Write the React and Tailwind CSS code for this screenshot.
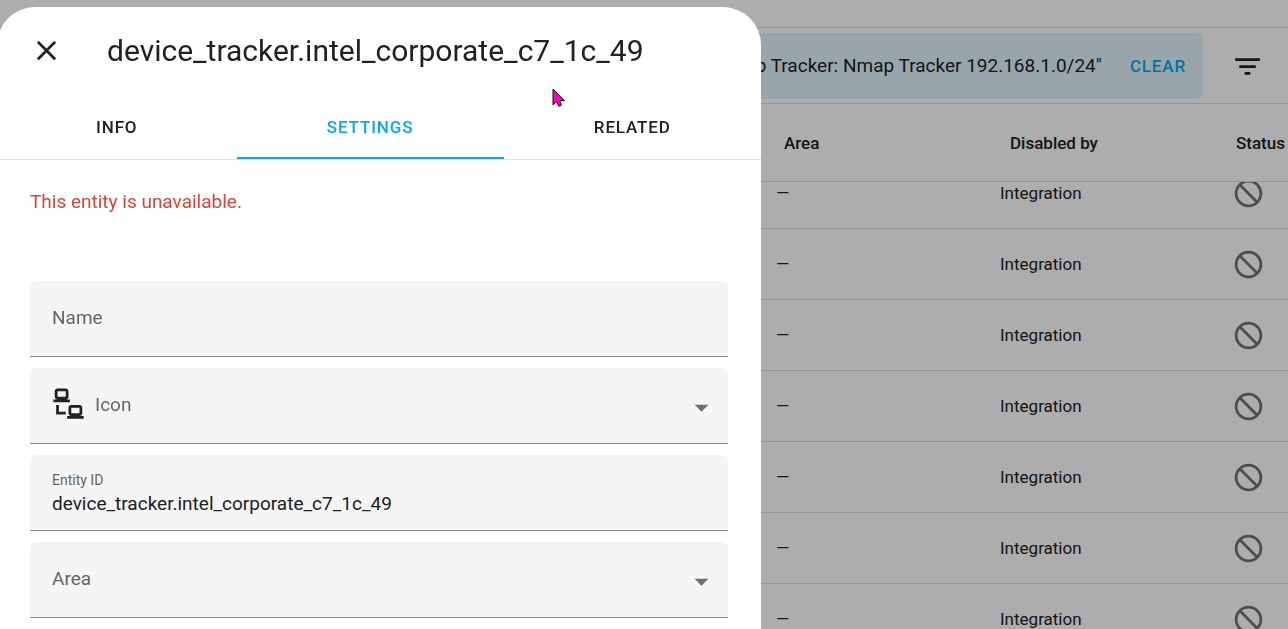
import React, { useLayoutEffect, useRef } from "react";

const icons = {
  close: "M19,6.41L17.59,5L12,10.59L6.41,5L5,6.41L10.59,12L5,17.59L6.41,19L12,13.41L17.59,19L19,17.59L13.41,12L19,6.41Z",
  filter: "M6,13H18V11H6M3,6V8H21V6M10,18H14V16H10V18Z",
  cancel: "M12,2A10,10 0 1,0 12,22A10,10 0 1,0 12,2M12,4C16.42,4 20,7.58 20,12C20,13.85 19.37,15.55 18.31,16.9L7.1,5.69C8.45,4.63 10.15,4 12,4M5.69,7.1L16.9,18.31C15.55,19.37 13.85,20 12,20C7.58,20 4,16.42 4,12C4,10.15 4.63,8.45 5.69,7.1Z",
  lan: "M4,1C2.89,1 2,1.89 2,3V7C2,8.11 2.89,9 4,9H1V11H13V9H10C11.11,9 12,8.11 12,7V3C12,1.89 11.11,1 10,1H4M4,3H10V7H4V3M3,13V20H10V18H5V13H3M14,13C12.89,13 12,13.89 12,15V19C12,20.11 12.89,21 14,21H11V23H23V21H20C21.11,21 22,20.11 22,19V15C22,13.89 21.11,13 20,13H14M14,15H20V19H14V15Z",
  down: "M7,10L12,15L17,10H7Z",
};

const Icon = ({ path, className = "" }) => (
  <svg viewBox="0 0 24 24" fill="currentColor" fillRule="evenodd" aria-hidden="true" className={`size-[33px] shrink-0 ${className}`}>
    <path d={path} />
  </svg>
);

const rows = [1, 2, 3, 4, 5, 6, 7];

const EntityTable = () => {
  const scroller = useRef(null);

  // Start slightly scrolled, so the first row slides under the header
  useLayoutEffect(() => {
    scroller.current.scrollTop = 24;
  }, []);

  return (
    <div ref={scroller} className="flex-1 min-h-0 overflow-hidden">
      <table className="w-full table-fixed border-separate border-spacing-0 text-left text-[17px]">
        <colgroup>
          <col />
          <col className="w-[224px]" />
          <col className="w-[232px]" />
          <col className="w-[78px]" />
        </colgroup>
        <thead className="sticky top-0 z-10 bg-white">
          <tr className="h-[78px]">
            <td className="border-b border-black/12"></td>
            <th className="border-b border-black/12 pt-0.5 pl-[30px] font-medium">Area</th>
            <th className="border-b border-black/12 pt-0.5 pl-8 font-medium">Disabled by</th>
            <th className="border-b border-black/12 pt-0.5 pl-[26px] font-medium">Status</th>
          </tr>
        </thead>
        <tbody>
          {rows.map((row) => (
            <tr key={row} className="h-[71px]">
              <td className="border-b border-black/12"></td>
              <td className="border-b border-black/12 pt-0.5 pl-[22px]">—</td>
              <td className="border-b border-black/12 pt-0.5 pl-[22px]">Integration</td>
              <td className="border-b border-black/12 pl-[22px] text-[#727272]">
                <Icon path={icons.cancel} />
              </td>
            </tr>
          ))}
        </tbody>
      </table>
    </div>
  );
};

const Tab = ({ label, active }) => (
  <button
    role="tab"
    aria-selected={active}
    className={`flex flex-auto items-center justify-center border-b-2 px-8 pt-1 text-[17px] font-medium uppercase tracking-wider ${active ? "border-[#03a9f4] text-[#03a9f4]" : "border-transparent"}`}
  >
    <span className="min-w-[59px]">{label}</span>
  </button>
);

// Filled text field; the label sits inline while the field is empty
const Field = ({ id, label, icon, value, dropdown }) => (
  <div className="flex h-[76px] items-center rounded-t-md border-b border-[#8a8a8a] bg-[#f5f5f5] pl-[22px] pr-[10px]">
    {icon && <Icon path={icon} className="mr-[10px] mb-1" />}
    {value ? (
      <div className="flex flex-1 flex-col">
        <label htmlFor={id} className="text-sm leading-5 text-[#666]">{label}</label>
        <input id={id} defaultValue={value} className="h-[26px] w-full bg-transparent pt-1 text-[19px] outline-none" />
      </div>
    ) : (
      <>
        <label htmlFor={id} className="text-[19px] text-[#666]">{label}</label>
        <input id={id} className="h-full min-w-0 flex-1 bg-transparent pl-2 text-[19px] outline-none" />
      </>
    )}
    {dropdown && (
      <button type="button" aria-label={`Open ${label} list`} className="mt-1 text-[#6e6e6e]">
        <Icon path={icons.down} />
      </button>
    )}
  </div>
);

const EntityDialog = () => (
  <div role="dialog" aria-labelledby="dialog-title" className="-ml-[3px] flex w-[764px] shrink-0 flex-col rounded-t-[38px] bg-white">
    <header className="flex h-[87px] items-center pl-[33px]">
      <button aria-label="Close">
        <Icon path={icons.close} />
      </button>
      <h1 id="dialog-title" className="pl-11 text-[30px] leading-9">device_tracker.intel_corporate_c7_1c_49</h1>
    </header>
    <div role="tablist" className="flex h-[66px] border-b border-black/12">
      <Tab label="Info" />
      <Tab label="Settings" active />
      <Tab label="Related" />
    </div>
    <div className="px-[33px] pt-7">
      <p className="text-[19px] leading-7 text-[#db4437]">This entity is unavailable.</p>
      <form className="mt-[65px] flex flex-col gap-[11px]">
        <Field id="name" label="Name" />
        <Field id="icon" label="Icon" icon={icons.lan} dropdown />
        <Field id="entity-id" label="Entity ID" value="device_tracker.intel_corporate_c7_1c_49" />
        <Field id="area" label="Area" dropdown />
      </form>
    </div>
  </div>
);

const App = () => {
  return (
    <div className="relative h-screen overflow-hidden bg-white font-['Roboto',sans-serif] text-[#212121]">
      <main className="flex h-full flex-col">
        <div className="h-7 shrink-0 border-b border-black/12"></div>
        <div className="flex h-[76px] shrink-0 items-center border-b border-black/12 pl-6 pr-6">
          <div className="flex h-[66px] flex-1 items-center justify-end rounded-md bg-[#03a9f4]/12 pt-0.5 pr-[17px]">
            <span className="text-[19px] whitespace-nowrap">Filtering by config entry "Nmap Tracker: Nmap Tracker 192.168.1.0/24"</span>
            <button className="ml-7 text-[17px] font-medium uppercase tracking-wider text-[#03a9f4]">Clear</button>
          </div>
          <button aria-label="Filter" className="mt-0.5 ml-7">
            <Icon path={icons.filter} />
          </button>
        </div>
        <EntityTable />
      </main>

      {/* Scrim + dialog */}
      <div className="absolute inset-0 z-20 flex overflow-hidden bg-black/32 pt-[7px]">
        <EntityDialog />
      </div>

      {/* Mouse pointer */}
      <svg viewBox="0 0 13 19" className="absolute top-[88px] left-[552px] z-30 h-[19px] w-[13px]" aria-hidden="true">
        <path d="M1,1V17L4.5,13.7L6.8,18.3L9.3,17.2L8,12.5H12.3Z" fill="#ff00b8" stroke="#111" strokeWidth="1" />
      </svg>
    </div>
  );
};

export default App;
